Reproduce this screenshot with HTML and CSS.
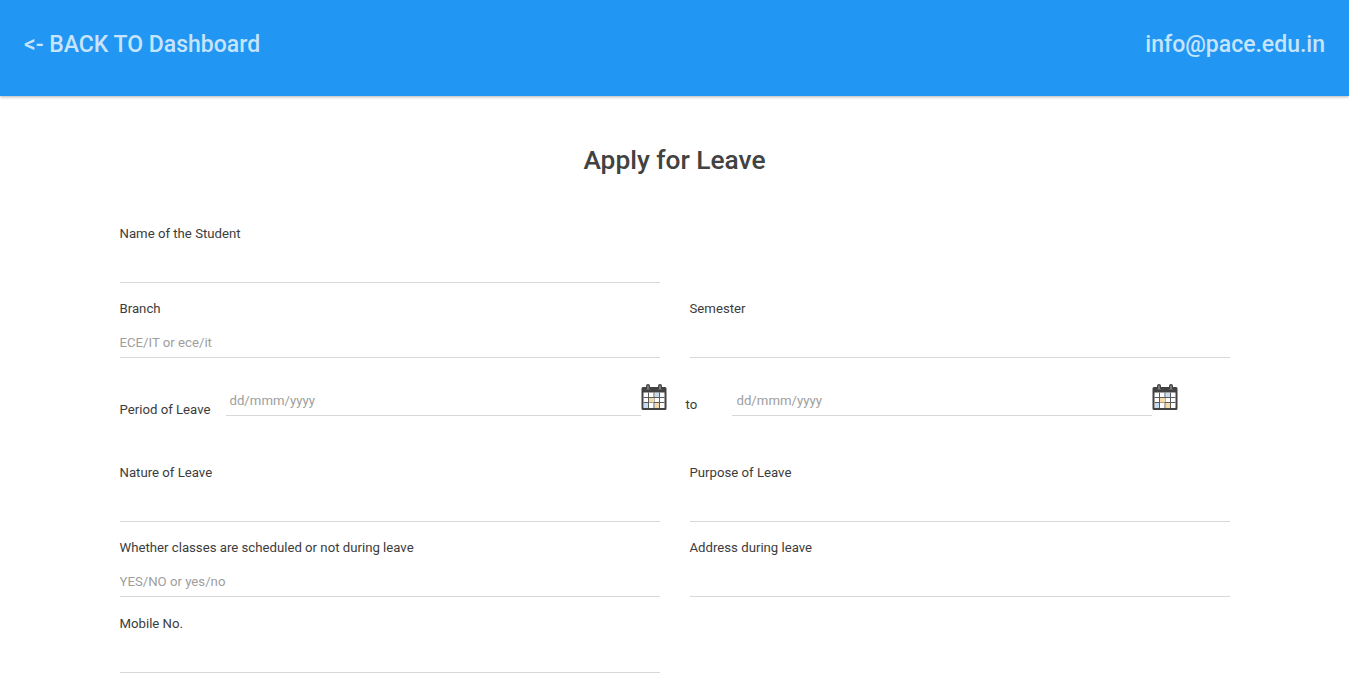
FILE: index.html
```html
<!DOCTYPE html>
<html lang="en">
<head>
<meta charset="utf-8">
<title>Apply for Leave</title>
<link rel="stylesheet" href="styles.css">
</head>
<body>
<svg class="defs" width="0" height="0" aria-hidden="true">
  <symbol id="cal" viewBox="0 0 26 26">
    <path fill="#424242" d="M2 3H5V6h4V3h8v3h4V3h3A1.500 1.500 0 0 1 25.500 4.500V24.500A1.500 1.500 0 0 1 24 26H2A1.500 1.500 0 0 1 .5 24.500V4.500A1.500 1.500 0 0 1 2 3Z"/>
    <rect x="5" y="0" width="4" height="7" rx="2" fill="#424242"/>
    <rect x="17" y="0" width="4" height="7" rx="2" fill="#424242"/>
    <rect x="6.500" y="1.500" width="1" height="4" fill="#fff" opacity=".6"/>
    <rect x="18.500" y="1.500" width="1" height="4" fill="#fff" opacity=".6"/>
    <rect x="2.500" y="8.500" width="21" height="15.500" fill="#fff"/>
    <path stroke="#5a5a5a" stroke-width="1" d="M7.500 8.500V24M13 8.500V24M18.500 8.500V24M2.500 13.500H23.500M2.500 18.500H23.500"/>
    <path fill="#f5d9a8" d="M8 14h5v4.500H8zM14 19h4v5h-4z"/>
    <path fill="#c6dcf2" d="M14 9h4v4h-4zM3 19h4v5H3z"/>
  </symbol>
</svg>
<header class="topbar">
  <a class="toplink" href="#">&lt;- BACK TO Dashboard</a>
  <a class="toplink" href="#">info@pace.edu.in</a>
</header>
<main class="page">
  <h1 class="title">Apply for Leave</h1>
  <form class="form">
    <div class="row">
      <div class="field"><label>Name of the Student</label><input type="text"></div>
      <div class="field empty"></div>
    </div>
    <div class="row">
      <div class="field"><label>Branch</label><input type="text" placeholder="ECE/IT or ece/it"></div>
      <div class="field"><label>Semester</label><input type="text"></div>
    </div>
    <div class="period">
      <label class="period-label">Period of Leave</label>
      <input class="date first" type="text" placeholder="dd/mmm/yyyy">
      <svg class="cal"><use href="#cal"/></svg>
      <span class="to">to</span>
      <input class="date second" type="text" placeholder="dd/mmm/yyyy">
      <svg class="cal"><use href="#cal"/></svg>
    </div>
    <div class="row">
      <div class="field"><label>Nature of Leave</label><input type="text"></div>
      <div class="field"><label>Purpose of Leave</label><input type="text"></div>
    </div>
    <div class="row">
      <div class="field"><label>Whether classes are scheduled or not during leave</label><input type="text" placeholder="YES/NO or yes/no"></div>
      <div class="field"><label>Address during leave</label><input type="text"></div>
    </div>
    <div class="row">
      <div class="field"><label>Mobile No.</label><input type="text"></div>
      <div class="field empty"></div>
    </div>
  </form>
</main>
</body>
</html>
```
FILE: styles.css
```css
* { box-sizing: border-box; }
html, body { height: 693px; overflow: hidden; }
body {
  margin: 0;
  background: #fff;
  font-family: Roboto, "Liberation Sans", sans-serif;
  color: #424242;
}
.defs { position: absolute; }
.topbar {
  height: 96px;
  background: #2196f3;
  padding: 0 24px;
  display: flex;
  justify-content: space-between;
  align-items: center;
  box-shadow: 0 1px 3px rgba(0,0,0,.3);
}
.toplink {
  color: #c6e4fc;
  font-size: 23px;
  font-weight: 500;
  line-height: 28px;
  text-decoration: none;
  margin-top: -6px;
}
.page { padding: 0 119.500px; }
.title {
  margin: 0;
  padding-top: 48px;
  height: 122px;
  text-align: center;
  font-size: 26.300px;
  font-weight: 500;
  line-height: 32px;
}
.form { display: flex; flex-direction: column; }
.row {
  display: flex;
  gap: 30px;
  margin-bottom: 10.400px;
}
.field { flex: 1 1 0; min-width: 0; display: flex; flex-direction: column; }
.field label {
  display: block;
  font-size: 13.200px;
  line-height: 15px;
  color: #3c3c3c;
  height: 31px;
  padding-top: 8px;
}
input {
  display: block;
  border: 0;
  border-bottom: 1px solid #d8d8d8;
  outline: 0;
  padding: 0;
  background: transparent;
  font: 13.200px/15px Roboto, "Liberation Sans", sans-serif;
  color: #333;
}
input::placeholder { color: #9e9e9e; opacity: 1; }
.field input { height: 34px; width: 100%; padding: 8px 0 5px; }
.period {
  display: flex;
  align-items: flex-end;
  height: 47.200px;
  margin-bottom: 41px;
}
.period-label { font-size: 13.200px; line-height: 15px; color: #3c3c3c; width: 106px; margin-bottom: -1px; }
.date { height: 28px; padding: 1px 4px 2px; }
.first { width: 415px; }
.second { width: 420px; padding-left: 5px; }
.cal { width: 26px; height: 26px; margin-bottom: 6px; flex: none; }
.to { font-size: 13.200px; line-height: 15px; color: #3c3c3c; width: 65px; padding-left: 19px; margin-bottom: 4px; }
```
